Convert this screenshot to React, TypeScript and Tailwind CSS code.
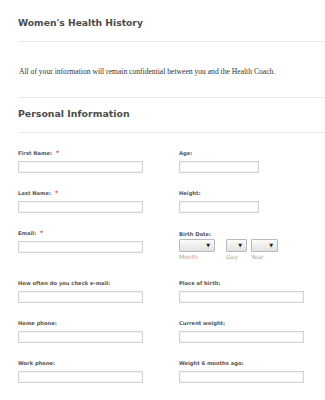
type Field = { label: string; required?: boolean; width?: string };

function Label({ text, required }: { text: string; required?: boolean }) {
  return (
    <div className="h-[8px] text-[5.2px] font-bold leading-[8px] text-[#555]">
      {text}
      {required && <span className="ml-[4px] text-[6px] text-[#e53935]">*</span>}
    </div>
  );
}

function TextBox({ width = "w-[125px]" }: { width?: string }) {
  return (
    <div
      className={`${width} mt-[4px] h-[12px] border border-[#d4d4d4] bg-white shadow-[inset_0_0_0_1px_#f4f4f4]`}
    />
  );
}

function Select({ width }: { width: string }) {
  return (
    <div
      className={`${width} flex h-[13px] items-center justify-end rounded-[1px] border border-[#b9b9b9] bg-gradient-to-b from-[#fbfbfb] to-[#e2e2e2] pr-[4px]`}
    >
      <span className="text-[5px] leading-none text-[#222]">▼</span>
    </div>
  );
}

function Cell({ f, tall }: { f: Field; tall?: boolean }) {
  return (
    <div className={`${tall ? "h-[50px]" : "h-[40px]"} pt-[16px]`}>
      <Label text={f.label} required={f.required} />
      <TextBox width={f.width} />
    </div>
  );
}

function BirthDate() {
  return (
    <div className="h-[50px] pt-[17px]">
      <Label text="Birth Date:" />
      <div className="mt-[1px] flex text-[6px] leading-[8px] text-[#aaa]">
        <div className="flex flex-col">
          <Select width="w-[36px]" />
          <span className="mt-[1px]">Month</span>
        </div>
        <div className="ml-[11px] flex flex-col">
          <Select width="w-[21px]" />
          <span className="mt-[1px]">Day</span>
        </div>
        <div className="ml-[4px] flex flex-col">
          <Select width="w-[27px]" />
          <span className="mt-[1px]">Year</span>
        </div>
      </div>
    </div>
  );
}

export default function App() {
  return (
    <div className="h-[400px] w-[325px] overflow-hidden bg-white pl-[18px] font-['DejaVu_Sans',Verdana,sans-serif]">
      <div className="h-[42px] border-b border-[#e9e9e9] pt-[17px]">
        <h1 className="text-[9.2px] font-bold leading-[12px] text-[#4b4b4b]">Women's Health History</h1>
      </div>
      <div className="h-[56px] border-b border-[#e9e9e9] pt-[25px] pl-[1px]">
        <p className="font-['Liberation_Serif',serif] text-[7.6px] leading-[10px] text-[#333]">
          All of your information will remain confidential between you and the Health Coach.
        </p>
      </div>
      <div className="h-[35px] border-b border-[#e9e9e9] pt-[10px]">
        <h2 className="text-[9.4px] font-bold leading-[12px] text-[#4b4b4b]">Personal Information</h2>
      </div>
      <div className="grid grid-cols-[161px_1fr]">
        <Cell f={{ label: "First Name:", required: true }} />
        <Cell f={{ label: "Age:", width: "w-[80px]" }} />
        <Cell f={{ label: "Last Name:", required: true }} />
        <Cell f={{ label: "Height:", width: "w-[80px]" }} />
        <Cell f={{ label: "Email:", required: true }} tall />
        <BirthDate />
        <Cell f={{ label: "How often do you check e-mail:" }} />
        <Cell f={{ label: "Place of birth:" }} />
        <Cell f={{ label: "Home phone:" }} />
        <Cell f={{ label: "Current weight:" }} />
        <Cell f={{ label: "Work phone:" }} />
        <Cell f={{ label: "Weight 6 months ago:" }} />
      </div>
    </div>
  );
}
